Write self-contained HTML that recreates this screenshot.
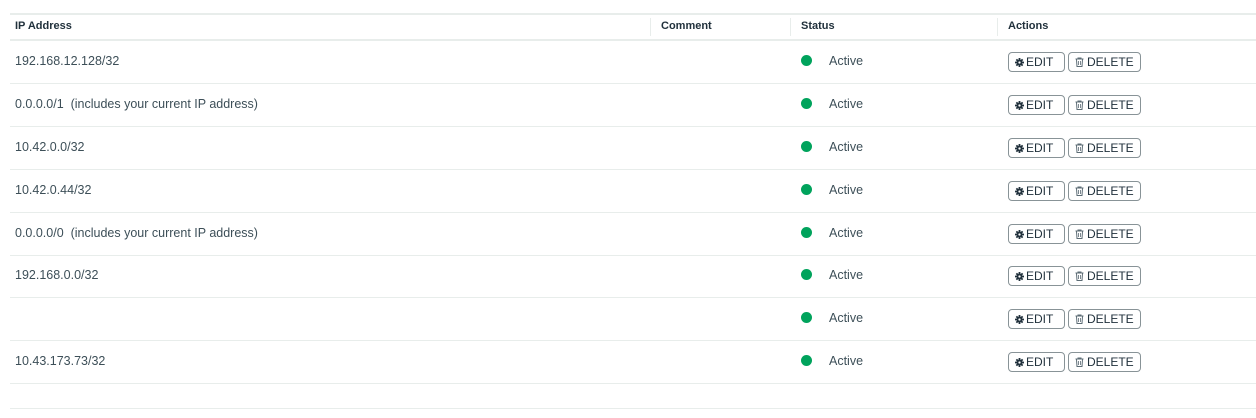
<!DOCTYPE html>
<html><head><style>
body{margin:0;width:1256px;height:418px;background:#fff;font-family:"Liberation Sans",sans-serif;color:#3d4f58;position:relative;overflow:hidden}
.l{position:absolute;left:10px;right:0;background:#e8edeb}
.t{position:absolute;font-size:12.5px;color:#3d4f58;white-space:nowrap}
.h{position:absolute;font-size:11px;font-weight:bold;color:#21313c;top:20px}
.v{position:absolute;top:18px;width:1px;height:18px;background:#e8edeb}
.dot{position:absolute;left:801px;width:11px;height:11px;border-radius:50%;background:#00a35c}
.btn{position:absolute;height:20px;border:1px solid #889397;border-radius:4px;font-size:12px;color:#21313c;line-height:18px;box-sizing:border-box;padding-left:6px}
</style></head><body>
<div class="l" style="top:13px;height:2px"></div>
<div class="l" style="top:39px;height:2px"></div>
<div class="h" style="left:15px">IP Address</div>
<div class="h" style="left:661px">Comment</div>
<div class="h" style="left:801px">Status</div>
<div class="h" style="left:1008px">Actions</div>
<div class="v" style="left:650px"></div><div class="v" style="left:790px"></div><div class="v" style="left:997px"></div>
<div id="rows"></div>
<script>
var ips=["192.168.12.128/32","0.0.0.0/1&nbsp; (includes your current IP address)","10.42.0.0/32","10.42.0.44/32","0.0.0.0/0&nbsp; (includes your current IP address)","192.168.0.0/32","","10.43.173.73/32"];
var c=[61,104,147,190,233,275,318,361],h="";
var gear='<svg width="9" height="9" viewBox="0 0 10 10" style="vertical-align:-1px;margin-right:2px"><circle cx="5" cy="5" r="3.3" fill="#21313c"/><g stroke="#21313c" stroke-width="2"><path d="M5 0v10M0 5h10M1.5 1.5l7 7M8.5 1.5l-7 7"/></g><circle cx="5" cy="5" r="1.3" fill="#fff"/></svg>';
var bin='<svg width="9" height="10" viewBox="0 0 9 10" style="vertical-align:-1px;margin-right:3px"><path d="M0.5 2h8M3 2V1h3v1M1.5 2.5l.5 7h5l.5-7" fill="none" stroke="#5c6c75" stroke-width="1"/><path d="M3.5 4v4M5.5 4v4" stroke="#5c6c75" stroke-width=".8"/></svg>';
for(var i=0;i<8;i++){var y=c[i];
h+='<div class="t" style="left:15px;top:'+(y-7)+'px">'+ips[i]+'</div>';
h+='<div class="dot" style="top:'+(y-6)+'px"></div>';
h+='<div class="t" style="left:829px;top:'+(y-7)+'px">Active</div>';
h+='<div class="btn" style="left:1008px;width:57px;top:'+(y-9)+'px">'+gear+'EDIT</div>';
h+='<div class="btn" style="left:1068px;width:73px;top:'+(y-9)+'px">'+bin+'DELETE</div>';
h+='<div class="l" style="top:'+(y+22)+'px;height:1px"></div>';}
h+='<div class="l" style="top:408px;height:1px"></div>';
document.getElementById("rows").innerHTML=h;
</script>
</body></html>
